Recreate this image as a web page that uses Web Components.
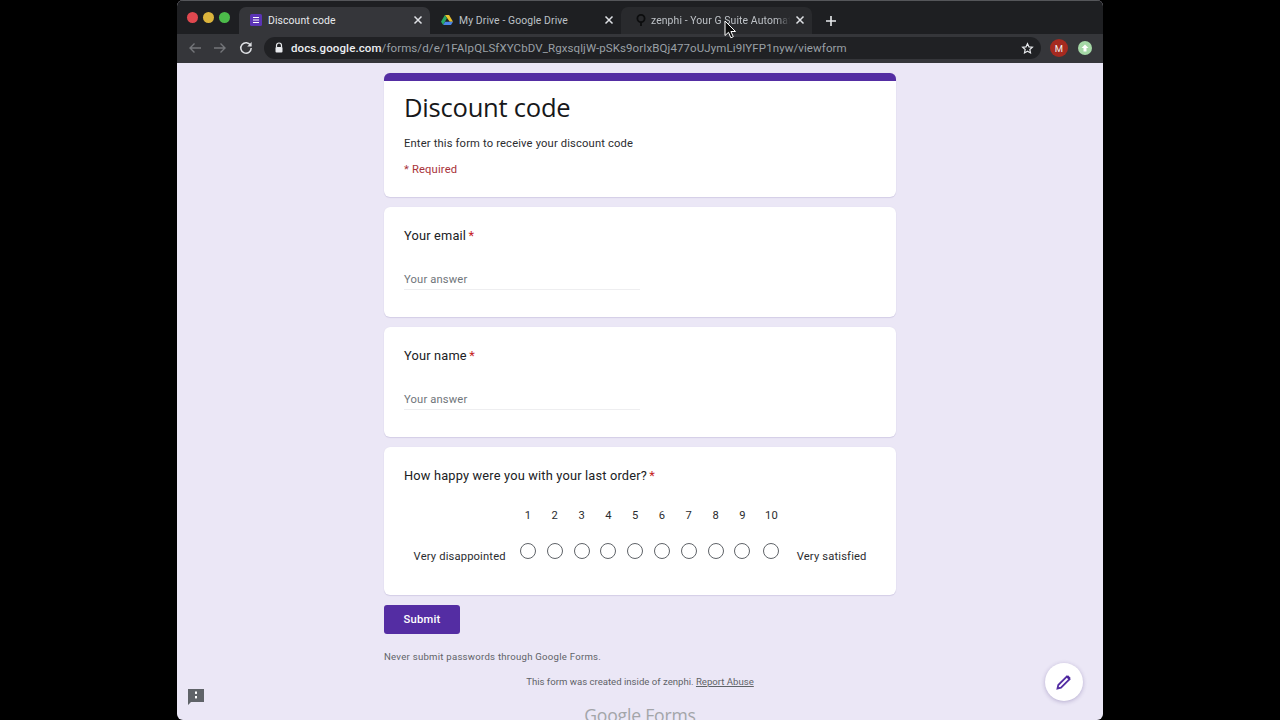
<!DOCTYPE html>
<html lang="en"><head><meta charset="utf-8"><title>Discount code</title>
<style>
html,body{margin:0;height:720px;overflow:hidden;background:#000}
body{display:flex;justify-content:center;font-family:Roboto,"Liberation Sans",sans-serif}
</style></head><body>
<template id="t-window"><style>
:host{display:flex;flex-direction:column;width:926px;height:720px;border-radius:6px;overflow:hidden;position:relative;background:#ebe7f6}
.strip{height:34px;flex:none;background:#1e1f22;border-top:1px solid #55565a;box-sizing:border-box;display:flex;align-items:flex-end;padding-left:62px}
.lights{position:absolute;left:10px;top:12px;display:flex;gap:5px}
.lights i{width:11px;height:11px;border-radius:50%;display:block}
.plus{width:36px;height:27px;display:flex;align-items:center;justify-content:center;margin-left:1px}
.bar{height:29px;flex:none;background:#35363a;display:flex;align-items:center;box-sizing:border-box;padding:0 0 1px 11px}
.nav{display:flex;align-items:center;width:76px;gap:11px;flex:none}
.nav svg{display:block}
.page{flex:1;min-height:0;overflow:hidden}
.cursor{position:absolute;left:547px;top:20px;z-index:5}
.feedback{position:absolute;left:10px;top:688px}
</style>
<div class="strip"><slot name="tabs"></slot>
<div class="plus"><svg width="12" height="12" viewBox="0 0 12 12"><path d="M6 1v10M1 6h10" stroke="#e8eaed" stroke-width="1.6"/></svg></div></div>
<div class="lights"><i style="background:#e0484f"></i><i style="background:#dcb43c"></i><i style="background:#4cbb4a"></i></div>
<div class="bar"><div class="nav">
<svg width="14" height="12" viewBox="0 0 14 12" fill="none" stroke="#74767a" stroke-width="1.4"><path d="M13 6H2M6.500 1.500 2 6l4.500 4.500"/></svg>
<svg width="14" height="12" viewBox="0 0 14 12" fill="none" stroke="#74767a" stroke-width="1.4"><path d="M1 6h11M7.500 1.500 12 6l-4.500 4.500"/></svg>
<svg width="14" height="14" viewBox="0 0 14 14" fill="none" style="margin-left:1px"><path d="M11.600 4.600A5.200 5.200 0 1 0 12.200 7" stroke="#dfe1e5" stroke-width="1.500"/><path d="M12.600 1v4.400H8.200z" fill="#dfe1e5"/></svg>
</div><slot name="address"></slot><slot name="actions"></slot></div>
<div class="page"><slot></slot></div>
<div class="feedback"><svg width="17" height="17" viewBox="0 0 17 17"><path d="M1 1h16v13H4l-3 3z" fill="#5f6368"/><rect x="8" y="3.500" width="2" height="2.400" fill="#fff"/><rect x="8" y="8" width="2" height="2.400" fill="#fff"/></svg></div>
<div class="cursor"><svg width="13" height="19" viewBox="0 0 13 19"><path d="M1 1v14.500l3.500-3.200 2.400 5.500 2.400-1.100-2.400-5.200H11.500z" fill="#0c0c0c" stroke="#fff" stroke-width="1"/></svg></div>
</template>

<template id="t-tab"><style>
:host{display:flex;align-items:center;width:191px;height:27px;box-sizing:border-box;padding:0 6px 1px 11px;color:#bdc1c6;font:400 10.400px Roboto,sans-serif;letter-spacing:.1px;border-radius:7px 7px 0 0;flex:none}
:host([active]){background:#35363a;color:#e8eaed}
:host([hover]){background:#292a2d}
.ic{width:12px;height:12px;display:flex;flex:none;margin-right:6px}
:host([hover]) .ic{margin-left:3px;margin-right:4px}
.t{flex:1;white-space:nowrap;overflow:hidden;min-width:0}
:host([hover]) .t{-webkit-mask-image:linear-gradient(90deg,#000 90%,transparent);mask-image:linear-gradient(90deg,#000 90%,transparent);margin-right:4px}
.x{width:12px;height:12px;flex:none}
</style><span class="ic"><slot name="icon"></slot></span><span class="t"><slot></slot></span>
<svg class="x" viewBox="0 0 12 12"><path d="M2.500 2.500l7 7M9.500 2.500l-7 7" stroke="#dfe1e5" stroke-width="1.500"/></svg></template>

<template id="t-address"><style>
:host{display:flex;align-items:center;width:777px;height:22px;box-sizing:border-box;border-radius:11px;background:#202124;padding:0 7px 0 10px;color:#9aa0a6;font:400 11.500px Roboto,sans-serif;letter-spacing:.1px;white-space:nowrap}
.lock{margin-right:7px;flex:none}
b{font-weight:500;color:#eceef1}
.u{flex:1;overflow:hidden}
</style><svg class="lock" width="10" height="12" viewBox="0 0 10 12"><path d="M2.500 5V3.500a2.500 2.500 0 0 1 5 0V5" fill="none" stroke="#e8eaed" stroke-width="1.200"/><rect x="1.500" y="5" width="7" height="5.500" rx="1" fill="#e8eaed"/></svg>
<span class="u"><b>docs.google.com</b>/forms/d/e/1FAIpQLSfXYCbDV_RgxsqljW-pSKs9orIxBQj477oUJymLi9IYFP1nyw/viewform</span>
<svg width="13" height="13" viewBox="0 0 24 24" fill="none" stroke="#e8eaed" stroke-width="2.200"><path d="M12 3l2.700 5.900 6.300.7-4.700 4.300 1.300 6.300L12 17.100l-5.600 3.100 1.300-6.300L3 9.600l6.300-.7z"/></svg></template>

<template id="t-actions"><style>
:host{display:flex;align-items:center;margin-left:9px;gap:10px}
.m{width:18px;height:18px;border-radius:50%;background:#a52a20;color:#eee;font:400 9.500px Roboto,sans-serif;display:flex;align-items:center;justify-content:center}
.e{width:14px;height:14px;border-radius:50%;background:#a5d8a6;display:flex;align-items:center;justify-content:center}
</style><span class="m">M</span><span class="e"><svg width="8" height="8" viewBox="0 0 8 8"><path d="M4 .5 7.500 4H5.500v3.500h-3V4H.5z" fill="#fff"/></svg></span></template>

<template id="t-form"><style>
:host{display:block;width:512px;margin:0 auto;padding-top:10px;color:#202124}
.list{display:flex;flex-direction:column;gap:10px}
</style><div class="list"><slot></slot></div><slot name="after"></slot></template>

<template id="t-card"><style>
:host{display:block;background:#fff;border-radius:6px;box-sizing:border-box;box-shadow:0 1px 1px rgba(60,40,120,.12),0 0 1px rgba(60,40,120,.1);padding:18.500px 20px 0;height:var(--h,auto)}
</style><slot></slot></template>

<template id="t-header"><style>
:host{display:block;background:#fff;border-radius:6px;box-sizing:border-box;height:124px;box-shadow:0 1px 1px rgba(60,40,120,.12),0 0 1px rgba(60,40,120,.1);border-top:8px solid #542da3;padding:7px 20px 0}
h1{margin:0;font:400 25.600px/40px "Open Sans",Roboto,sans-serif;letter-spacing:-.25px;color:#17181a}
p{margin:6px 0 0;font:400 11.200px/20px Roboto,sans-serif;letter-spacing:.16px;color:#2b2c2f}
.r{margin-top:6px;font:400 11.200px/20px Roboto,sans-serif;letter-spacing:.16px;color:#a8323a}
</style><h1><slot name="title"></slot></h1><p><slot></slot></p><div class="r"><slot name="req"></slot></div></template>

<template id="t-q"><style>
:host{display:block;font:400 12.800px/20px Roboto,sans-serif;letter-spacing:.18px;color:#202124}
i{font-style:normal;color:#c5221f;margin-left:-1px}
</style><slot></slot> <i>*</i></template>

<template id="t-input"><style>
:host{display:block;width:236px;margin-top:24.500px;height:20px;box-sizing:border-box;border-bottom:1px solid #eeeef0;font:400 11.200px/20px Roboto,sans-serif;letter-spacing:.16px;color:#70757a}
</style><slot></slot></template>

<template id="t-scale"><style>
:host{display:grid;grid-template-columns:110.650px repeat(9,26.800px) 31.300px 89px;margin-top:20.500px;font:400 11.200px/20px Roboto,sans-serif;letter-spacing:.16px;color:#2b2c2f}
.n{text-align:center}
.o{display:flex;justify-content:center;height:30px;padding-top:17px}
.o i{width:16px;height:16px;border:1.500px solid #5f6368;box-sizing:border-box;border-radius:50%;display:block}
.l{padding:21px 0 0 9.600px;white-space:nowrap}
</style><span></span>
<span class="n">1</span><span class="n">2</span><span class="n">3</span><span class="n">4</span><span class="n">5</span><span class="n">6</span><span class="n">7</span><span class="n">8</span><span class="n">9</span><span class="n">10</span><span></span>
<span class="l">Very disappointed</span>
<span class="o"><i></i></span><span class="o"><i></i></span><span class="o"><i></i></span><span class="o"><i></i></span><span class="o"><i></i></span><span class="o"><i></i></span><span class="o"><i></i></span><span class="o"><i></i></span><span class="o"><i></i></span><span class="o"><i></i></span>
<span class="l">Very satisfied</span></template>

<template id="t-footer"><style>
:host{display:block;color:#5f6368;font:400 9.600px/16px Roboto,sans-serif;letter-spacing:.25px}
.btn{margin-top:10px;width:76px;height:29px;border-radius:3px;background:#542da3;color:#fff;font:500 11.200px/29px Roboto,sans-serif;letter-spacing:.2px;text-align:center}
.nv{margin-top:15px}
.cr{margin-top:9px;text-align:center;letter-spacing:0}
u{color:#5f6368}
.gf{margin-top:13px;text-align:center;font:400 17.600px/24px "Open Sans",Roboto,sans-serif;color:#a3a5a9;letter-spacing:-.2px;white-space:nowrap}
.gf b{font-weight:500}
</style><div class="btn">Submit</div><div class="nv">Never submit passwords through Google Forms.</div>
<div class="cr">This form was created inside of zenphi. <u>Report Abuse</u></div>
<div class="gf"><b>Google</b> Forms</div></template>

<template id="t-fab"><style>
:host{position:absolute;left:868px;top:663px;width:38px;height:38px;border-radius:50%;background:#fff;box-shadow:0 1px 4px rgba(60,40,120,.3);display:flex;align-items:center;justify-content:center}
</style><svg width="16" height="16" viewBox="0 0 16 16"><path d="M1.500 14.500l.8-3.500L10.800 2.500l2.700 2.700L5 13.700z" fill="none" stroke="#542da3" stroke-width="1.800"/><path d="M10.500 2.800 12 1.300l2.700 2.700-1.500 1.500z" fill="#4a249c"/></svg></template>

<browser-window>
  <browser-tab slot="tabs" active><svg slot="icon" width="12" height="12" viewBox="0 0 12 12"><rect width="12" height="12" rx="1.500" fill="#5b34b5"/><path d="M3 3.500h6M3 6h6M3 8.500h6" stroke="#fff" stroke-width="1.100"/></svg>Discount code</browser-tab>
  <browser-tab slot="tabs"><svg slot="icon" width="13" height="12" viewBox="0 0 13 12"><path d="M4.200.5h4.600L13 8H9.500z" fill="#e9c12e"/><path d="M4.200.5 6.400 4 2.400 11.500 0 8z" fill="#2aa866"/><path d="M4.400 8H13l-2.200 3.500H2.400z" fill="#4a86e8"/></svg>My Drive - Google Drive</browser-tab>
  <browser-tab slot="tabs" hover><svg slot="icon" width="12" height="12" viewBox="0 0 12 12" fill="none" stroke="#0c0d0e" stroke-width="1.800"><circle cx="6" cy="4.500" r="3.600"/><path d="M6 8v4"/></svg>zenphi - Your G Suite Automation</browser-tab>
  <browser-address slot="address"></browser-address>
  <browser-actions slot="actions"></browser-actions>
  <form-page>
    <form-header><span slot="title">Discount code</span>Enter this form to receive your discount code<span slot="req">* Required</span></form-header>
    <form-card style="--h:110px"><form-q>Your email</form-q><form-input>Your answer</form-input></form-card>
    <form-card style="--h:110px"><form-q>Your name</form-q><form-input>Your answer</form-input></form-card>
    <form-card style="--h:148px"><form-q>How happy were you with your last order?</form-q><form-scale></form-scale></form-card>
    <form-footer slot="after"></form-footer>
  </form-page>
  <form-fab></form-fab>
</browser-window>

<script>
const map={'browser-window':'t-window','browser-tab':'t-tab','browser-address':'t-address','browser-actions':'t-actions','form-page':'t-form','form-card':'t-card','form-header':'t-header','form-q':'t-q','form-input':'t-input','form-scale':'t-scale','form-footer':'t-footer','form-fab':'t-fab'};
for(const [name,id] of Object.entries(map)){
  customElements.define(name,class extends HTMLElement{
    constructor(){super();this.attachShadow({mode:'open'}).appendChild(document.getElementById(id).content.cloneNode(true));}
  });
}
</script>
</body></html>
